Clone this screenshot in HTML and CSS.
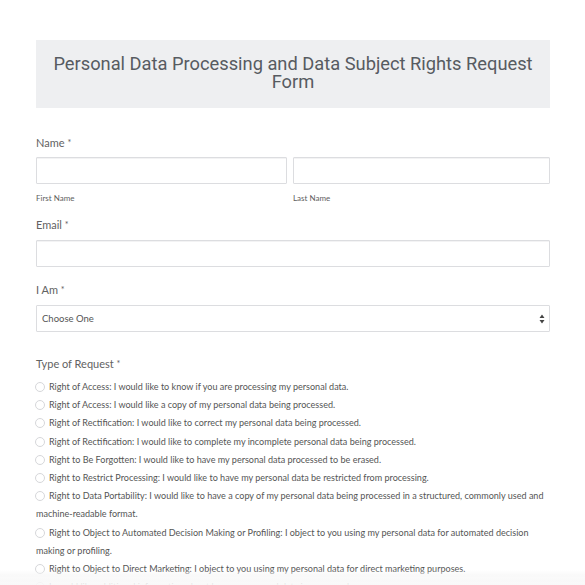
FILE: index.html
```html
<!DOCTYPE html>
<html lang="en">
<head>
    <meta charset="UTF-8">
    <meta name="viewport" content="width=device-width, initial-scale=1.0">
    <title>Data Subject Rights Request</title>
    <link rel="stylesheet" href="styles.css">
</head>
<body>
    <div class="form-wrap">
        <div class="form-header">
            <h1>Personal Data Processing and Data Subject Rights Request Form</h1>
        </div>
        <form class="request-form">
            <div class="field field-name">
                <label class="field-label">Name <span class="req">*</span></label>
                <div class="name-row">
                    <div class="name-col">
                        <input type="text" class="text-input">
                        <span class="sub-label">First Name</span>
                    </div>
                    <div class="name-col">
                        <input type="text" class="text-input">
                        <span class="sub-label">Last Name</span>
                    </div>
                </div>
            </div>
            <div class="field">
                <label class="field-label">Email <span class="req">*</span></label>
                <input type="email" class="text-input">
            </div>
            <div class="field">
                <label class="field-label">I Am <span class="req">*</span></label>
                <div class="select-box">
                    <span>Choose One</span>
                    <svg class="arrows" width="6" height="10" viewBox="0 0 6 10"><path d="M3 0.5 L5.5 4 H0.5 Z M3 9.5 L5.5 6 H0.5 Z" fill="#444"/></svg>
                </div>
            </div>
            <div class="field field-request">
                <label class="field-label">Type of Request <span class="req">*</span></label>
                <div class="options">
                    <label class="option"><span class="radio"></span>Right of Access: I would like to know if you are processing my personal data.</label>
                    <label class="option"><span class="radio"></span>Right of Access: I would like a copy of my personal data being processed.</label>
                    <label class="option"><span class="radio"></span>Right of Rectification: I would like to correct my personal data being processed.</label>
                    <label class="option"><span class="radio"></span>Right of Rectification: I would like to complete my incomplete personal data being processed.</label>
                    <label class="option"><span class="radio"></span>Right to Be Forgotten: I would like to have my personal data processed to be erased.</label>
                    <label class="option"><span class="radio"></span>Right to Restrict Processing: I would like to have my personal data be restricted from processing.</label>
                    <label class="option"><span class="radio"></span>Right to Data Portability: I would like to have a copy of my personal data being processed in a structured, commonly used and machine-readable format.</label>
                    <label class="option"><span class="radio"></span>Right to Object to Automated Decision Making or Profiling: I object to you using my personal data for automated decision making or profiling.</label>
                    <label class="option"><span class="radio"></span>Right to Object to Direct Marketing: I object to you using my personal data for direct marketing purposes.</label>
                    <label class="option"><span class="radio"></span>I would like additional information about how my personal data is processed.</label>
                </div>
            </div>
        </form>
    </div>
    <div class="bottom-fade"></div>
</body>
</html>
```

FILE: styles.css
```css
body {
    margin: 0;
    padding: 0;
    background: #ffffff;
    font-family: 'Lato', 'Liberation Sans', sans-serif;
    color: #5b5b5b;
}

.form-wrap {
    width: 514px;
    margin: 0 0 0 36px;
    padding-top: 40px;
}

.form-header {
    background: #eeeff1;
    height: 68px;
    display: flex;
    align-items: center;
    justify-content: center;
    text-align: center;
    padding: 0 8px;
    box-sizing: border-box;
}

.form-header h1 {
    margin: 0;
    font-family: 'Roboto', sans-serif;
    font-weight: 400;
    font-size: 18.3px;
    line-height: 18px;
    color: #575b61;
    padding-bottom: 2px;
}

.request-form {
    padding-top: 27px;
}

.field {
    margin-bottom: 15px;
}

.field-name {
    margin-bottom: 13px;
}

.field-label {
    display: block;
    font-size: 11px;
    line-height: 16px;
    color: #626262;
    margin-bottom: 7px;
}

.field-name .field-label {
    margin-bottom: 6px;
}

.req {
    font-size: 9px;
    vertical-align: top;
}

.name-row {
    display: grid;
    grid-template-columns: 1fr 1fr;
}

.name-col {
    display: flex;
    flex-direction: column;
}

.name-col:first-child {
    padding-right: 6px;
}

.text-input {
    display: block;
    width: 100%;
    height: 27px;
    box-sizing: border-box;
    border: 1px solid #dcdde0;
    border-radius: 1px;
    box-shadow: inset 0 1px 0 #f3f3f4;
    margin: 0;
    background: #fff;
}

.sub-label {
    font-size: 8px;
    line-height: 12px;
    margin-top: 8px;
    color: #5e5e5e;
}

.select-box {
    height: 27px;
    box-sizing: border-box;
    border: 1px solid #dcdde0;
    border-radius: 1px;
    display: flex;
    align-items: center;
    justify-content: space-between;
    padding: 0 4px 0 5px;
    font-size: 9.5px;
    color: #555;
}

.field-request {
    padding-top: 9px;
}

.field-request .field-label {
    margin-bottom: 6px;
}

.option {
    display: block;
    font-size: 9.05px;
    line-height: 18.2px;
    color: #555555;
}

.radio {
    display: inline-block;
    box-sizing: border-box;
    width: 10px;
    height: 10px;
    border: 1px solid #d6d7da;
    border-radius: 50%;
    margin-left: -1px;
    margin-right: 4px;
    vertical-align: -2px;
    background: #fff;
}

.bottom-fade {
    position: fixed;
    left: 0;
    right: 0;
    bottom: 0;
    height: 15px;
    background: linear-gradient(rgba(250, 250, 250, 0), rgba(246, 246, 246, 0.6) 30%, rgba(248, 248, 248, 0.92));
}
```
